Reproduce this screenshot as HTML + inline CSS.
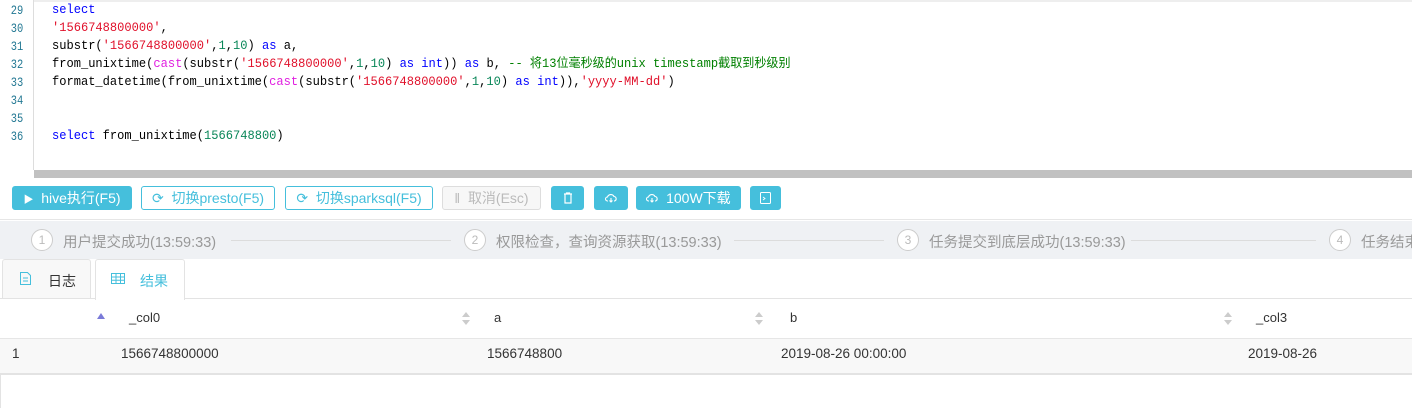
<!DOCTYPE html>
<html><head><meta charset="utf-8"><style>
*{margin:0;padding:0;box-sizing:border-box}
body{width:1412px;height:408px;overflow:hidden;background:#fff;font-family:"Liberation Sans","Noto Sans CJK SC",sans-serif;position:relative;color:#333}
.abs{position:absolute}
.gut{left:0;top:0;width:34px;height:170px;border-right:1px solid #ddd;background:#fff}
.ln{position:absolute;left:0;width:34px;text-align:center;font:13px "Liberation Mono",monospace;color:#237893;transform:scaleX(.8)}
.cl{position:absolute;left:52px;font:12.5px/18px "Liberation Mono","Noto Sans CJK SC",monospace;color:#000;transform:scaleX(.965);transform-origin:left;white-space:pre}
.k{color:#0000ff}.s{color:#e0102a}.n{color:#098658}.f{color:#e020e0}.c{color:#008000}
.btn{position:absolute;top:186px;height:24px;border-radius:3px;font-size:14px;line-height:22px;text-align:center;border:1px solid #45bfdc;white-space:nowrap}
.fill{background:#45bfdc;color:#fff}
.out{background:#fff;color:#45bfdc}
.dis{background:#f7f7f7;color:#bbb;border-color:#ddd}
.step{position:absolute;top:229px;width:22px;height:22px;border:1px solid #ccc;border-radius:50%;background:#fff;font-size:12px;color:#bbb;text-align:center;line-height:20px}
.st{position:absolute;top:231px;font-size:14.5px;color:#999;white-space:nowrap}
.sl{position:absolute;top:240px;height:1px;background:#dcdcdc}
.th{position:absolute;top:310px;font-size:13px;color:#333}
.td{position:absolute;top:346px;font:13.5px "Liberation Sans",sans-serif;color:#333}
.sort{position:absolute;top:312px;width:8px;height:14px}
</style></head><body>
<div class="abs" style="left:0;top:0;width:1412px;height:2px;background:#eee"></div>
<div class="abs gut"></div>
<div class="ln" style="top:3px">29</div><div class="ln" style="top:21px">30</div><div class="ln" style="top:39px">31</div><div class="ln" style="top:57px">32</div><div class="ln" style="top:75px">33</div><div class="ln" style="top:93px">34</div><div class="ln" style="top:111px">35</div><div class="ln" style="top:129px">36</div>
<div class="cl" style="top:1px"><span class="k">select</span></div>
<div class="cl" style="top:19px"><span class="s">'1566748800000'</span>,</div>
<div class="cl" style="top:37px">substr(<span class="s">'1566748800000'</span>,<span class="n">1</span>,<span class="n">10</span>) <span class="k">as</span> a,</div>
<div class="cl" style="top:55px">from_unixtime(<span class="f">cast</span>(substr(<span class="s">'1566748800000'</span>,<span class="n">1</span>,<span class="n">10</span>) <span class="k">as</span> <span class="k">int</span>)) <span class="k">as</span> b, <span class="c">-- 将13位毫秒级的unix timestamp截取到秒级别</span></div>
<div class="cl" style="top:73px">format_datetime(from_unixtime(<span class="f">cast</span>(substr(<span class="s">'1566748800000'</span>,<span class="n">1</span>,<span class="n">10</span>) <span class="k">as</span> <span class="k">int</span>)),<span class="s">'yyyy-MM-dd'</span>)</div>
<div class="cl" style="top:127px"><span class="k">select</span> from_unixtime(<span class="n">1566748800</span>)</div>
<div class="abs" style="left:34px;top:170px;width:1378px;height:8px;background:#c1c1c1"></div>
<div class="abs" style="left:0;top:178px;width:1412px;height:42px;border-bottom:1px solid #e6e6e6"></div>

<div class="btn fill" style="left:12px;width:120px"><span style="font-size:10px">▶</span>&nbsp; hive执行(F5)</div>
<div class="btn out" style="left:141px;width:134px">⟳&nbsp; 切换presto(F5)</div>
<div class="btn out" style="left:285px;width:148px">⟳&nbsp; 切换sparksql(F5)</div>
<div class="btn dis" style="left:442px;width:99px">ǁ&nbsp; 取消(Esc)</div>
<div class="btn fill" style="left:551px;width:33px"><svg width="10" height="12" viewBox="0 0 10 12" style="margin-top:5px"><path d="M1 2h8M3.5 2V1h3v1M2 2.5v8.5h6V2.5" fill="none" stroke="#fff" stroke-width="1.2"/></svg></div>
<div class="btn fill" style="left:594px;width:34px"><svg width="12" height="10" viewBox="0 0 12 10" style="margin-top:6px"><path d="M3 8H2.5A2 2 0 0 1 2.5 4 3.5 3.5 0 0 1 9 3.5 2.3 2.3 0 0 1 9.5 8H9M6 5v4M4.5 7.5 6 9l1.5-1.5" fill="none" stroke="#fff" stroke-width="1.1"/></svg></div>
<div class="btn fill" style="left:636px;width:105px"><svg width="12" height="10" viewBox="0 0 12 10"><path d="M3 8H2.5A2 2 0 0 1 2.5 4 3.5 3.5 0 0 1 9 3.5 2.3 2.3 0 0 1 9.5 8H9M6 5v4M4.5 7.5 6 9l1.5-1.5" fill="none" stroke="#fff" stroke-width="1.1"/></svg>&nbsp; 100W下载</div>
<div class="btn fill" style="left:750px;width:31px"><svg width="11" height="12" viewBox="0 0 11 12" style="margin-top:5px"><rect x=".5" y=".5" width="10" height="11" rx="1" fill="none" stroke="#fff"/><path d="M3 5l2 1.5L3 8" fill="none" stroke="#fff" stroke-width=".9"/></svg></div>

<div class="abs" style="left:0;top:221px;width:1412px;height:38px;background:#eff1f4"></div>
<div class="step" style="left:31px">1</div><div class="st" style="left:63px">用户提交成功(13:59:33)</div>
<div class="sl" style="left:231px;width:220px"></div>
<div class="step" style="left:464px">2</div><div class="st" style="left:496px">权限检查，查询资源获取(13:59:33)</div>
<div class="sl" style="left:734px;width:150px"></div>
<div class="step" style="left:897px">3</div><div class="st" style="left:929px">任务提交到底层成功(13:59:33)</div>
<div class="sl" style="left:1131px;width:185px"></div>
<div class="step" style="left:1329px">4</div><div class="st" style="left:1361px">任务结束</div>

<div class="abs" style="left:0;top:298px;width:1412px;height:1px;background:#e3e3e3"></div>
<div class="abs" style="left:2px;top:259px;width:89px;height:39px;background:#f8f8f8;border:1px solid #e3e3e3;border-bottom:none;border-radius:3px 3px 0 0"></div>
<svg class="abs" style="left:20px;top:272px" width="11" height="13" viewBox="0 0 11 13"><path d="M.5.5h7l3 3v9H.5z M3 6h5M3 9h5" fill="none" stroke="#45bfdc"/></svg>
<div class="abs" style="left:48px;top:271px;font-size:14px;color:#333">日志</div>
<div class="abs" style="left:95px;top:259px;width:90px;height:41px;background:#fff;border:1px solid #e3e3e3;border-bottom:none;border-radius:3px 3px 0 0"></div>
<svg class="abs" style="left:111px;top:273px" width="14" height="11" viewBox="0 0 14 11"><path d="M.5.5h13v10H.5zM.5 4h13M.5 7.3h13M5 .5v10M9.5.5v10" fill="none" stroke="#45bfdc"/></svg>
<div class="abs" style="left:140px;top:271px;font-size:14px;color:#45bfdc">结果</div>

<div class="abs" style="left:0;top:338px;width:1412px;height:1px;background:#e6e6e6"></div>
<svg class="abs" style="left:97px;top:313px" width="8" height="6"><path d="M0 6L4 0 8 6z" fill="#7a7ad8"/></svg>
<div class="th" style="left:129px">_col0</div>
<svg class="sort" style="left:462px"><path d="M0 5L4 0 8 5zM0 8l4 5 4-5z" fill="#ccc"/></svg>
<div class="th" style="left:494px">a</div>
<svg class="sort" style="left:755px"><path d="M0 5L4 0 8 5zM0 8l4 5 4-5z" fill="#ccc"/></svg>
<div class="th" style="left:790px">b</div>
<svg class="sort" style="left:1224px"><path d="M0 5L4 0 8 5zM0 8l4 5 4-5z" fill="#ccc"/></svg>
<div class="th" style="left:1256px">_col3</div>

<div class="abs" style="left:0;top:339px;width:1412px;height:34px;background:#f8f8f8"></div>
<div class="abs" style="left:0;top:373px;width:1412px;height:2px;background:#e3e3e3"></div>
<div class="td" style="left:12px">1</div>
<div class="td" style="left:121px">1566748800000</div>
<div class="td" style="left:487px">1566748800</div>
<div class="td" style="left:781px">2019-08-26 00:00:00</div>
<div class="td" style="left:1248px">2019-08-26</div>
<div class="abs" style="left:0;top:375px;width:1px;height:33px;background:#e3e3e3"></div>
</body></html>
